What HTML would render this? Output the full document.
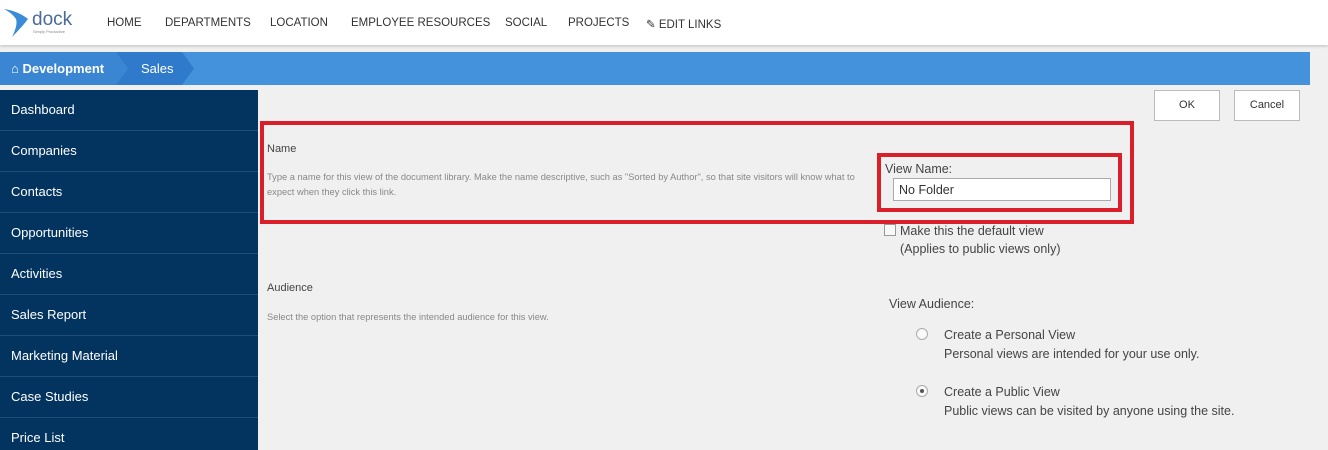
<!DOCTYPE html>
<html><head><style>
body{margin:0;width:1328px;height:450px;overflow:hidden;background:#f0f0f0;font-family:"Liberation Sans",sans-serif;position:relative}
.a{position:absolute}
.top{left:0;top:0;width:1328px;height:45px;background:#fff;box-shadow:0 1px 3px #bbb}
.nav{top:17px;font-size:11.5px;color:#333}
.bc{left:0;top:52px;width:1310px;height:33px;background:#4592dc}
.side{left:0;top:90px;width:258px;height:360px;background:#03345f;overflow:hidden}
.side div{height:40px;border-bottom:1px solid #1f4d78;color:#fff;font-size:13px;line-height:40px;padding-left:11px}
.btn{background:#fff;border:1px solid #bbb;font-size:11px;color:#333;text-align:center;line-height:29px;height:29px}
.s{font-size:11px;color:#444}
.g{font-size:9.3px;color:#888;line-height:15px}
.t{font-size:12.5px;color:#444}
</style></head><body>
<div class="a top"></div>
<svg class="a" style="left:4px;top:7px" width="26" height="32"><path d="M0 2 Q14 4 24 12 Q18 20 8 30 Q14 18 12 12 Q8 6 0 2Z" fill="#3c8bd6"/></svg>
<div class="a" style="left:32px;top:9px;font-size:19px;color:#4a6a9a">dock</div>
<div class="a" style="left:33px;top:29px;font-size:4px;color:#888">Simply Productive</div>
<div class="a nav" style="left:107px">HOME</div>
<div class="a nav" style="left:165px">DEPARTMENTS</div>
<div class="a nav" style="left:270px">LOCATION</div>
<div class="a nav" style="left:351px">EMPLOYEE RESOURCES</div>
<div class="a nav" style="left:505px">SOCIAL</div>
<div class="a nav" style="left:568px">PROJECTS</div>
<div class="a nav" style="left:646px">✎ EDIT LINKS</div>
<div class="a bc"></div>
<svg class="a" style="left:0;top:52px" width="200" height="33"><path d="M0 0H116L128 16.5L116 33H0Z" fill="#3a86d2"/><path d="M116 0H182L194 16.5L182 33H116L128 16.5Z" fill="#2f7acb"/></svg>
<div class="a" style="left:11px;top:61px;color:#fff;font-size:13px;font-weight:bold">⌂ Development</div>
<div class="a" style="left:141px;top:61px;color:#fff;font-size:13px">Sales</div>
<div class="a side"><div>Dashboard</div><div>Companies</div><div>Contacts</div><div>Opportunities</div><div>Activities</div><div>Sales Report</div><div>Marketing Material</div><div>Case Studies</div><div>Price List</div></div>
<div class="a btn" style="left:1154px;top:90px;width:64px">OK</div>
<div class="a btn" style="left:1234px;top:90px;width:64px">Cancel</div>
<div class="a" style="left:260px;top:121px;width:866px;height:95px;border:4px solid #d9202a"></div>
<div class="a" style="left:877px;top:153px;width:237px;height:51px;border:4px solid #d9202a"></div>
<div class="a s" style="left:267px;top:143px">Name</div>
<div class="a g" style="left:267px;top:170px;width:600px">Type a name for this view of the document library. Make the name descriptive, such as "Sorted by Author", so that site visitors will know what to expect when they click this link.</div>
<div class="a t" style="left:885px;top:162px">View Name:</div>
<div class="a" style="left:893px;top:178px;width:216px;height:21px;background:#fff;border:1px solid #aaa"></div>
<div class="a t" style="left:899px;top:183px;color:#333">No Folder</div>
<div class="a" style="left:884px;top:224px;width:10px;height:10px;border:1px solid #999;background:#f8f8f8"></div>
<div class="a t" style="left:900px;top:222px;line-height:18px">Make this the default view<br>(Applies to public views only)</div>
<div class="a s" style="left:267px;top:282px">Audience</div>
<div class="a g" style="left:267px;top:310px">Select the option that represents the intended audience for this view.</div>
<div class="a t" style="left:889px;top:297px">View Audience:</div>
<div class="a" style="left:916px;top:328px;width:10px;height:10px;border:1px solid #aaa;border-radius:50%;background:#fafafa"></div>
<div class="a t" style="left:944px;top:326px;line-height:19px">Create a Personal View<br>Personal views are intended for your use only.</div>
<div class="a" style="left:916px;top:385px;width:10px;height:10px;border:1px solid #aaa;border-radius:50%;background:#fafafa"></div>
<div class="a" style="left:920px;top:389px;width:4px;height:4px;border-radius:50%;background:#555"></div>
<div class="a t" style="left:944px;top:383px;line-height:19px">Create a Public View<br>Public views can be visited by anyone using the site.</div>
</body></html>
